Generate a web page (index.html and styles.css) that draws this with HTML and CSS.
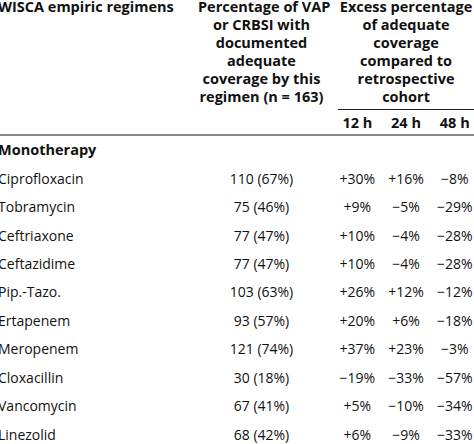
FILE: index.html
```html
<!DOCTYPE html>
<html>
<head>
<meta charset="utf-8">
<link rel="stylesheet" href="styles.css">
</head>
<body>
<table class="tbl">
  <colgroup>
    <col class="c-name">
    <col class="c-pct">
    <col class="c-h">
    <col class="c-h">
    <col class="c-h">
  </colgroup>
  <thead>
    <tr>
      <th class="h-name" rowspan="2">WISCA empiric regimens</th>
      <th class="h-pct" rowspan="2">Percentage of VAP<br>or CRBSI with<br>documented<br>adequate<br>coverage by this<br>regimen (n = 163)</th>
      <th class="h-excess" colspan="3">Excess percentage<br>of adequate<br>coverage<br>compared to<br>retrospective<br>cohort</th>
    </tr>
    <tr>
      <th class="h-time">12 h</th>
      <th class="h-time">24 h</th>
      <th class="h-time">48 h</th>
    </tr>
  </thead>
  <tbody>
    <tr class="group"><td colspan="5">Monotherapy</td></tr>
    <tr><td>Ciprofloxacin</td><td class="pct">110 (67%)</td><td class="num">+30%</td><td class="num">+16%</td><td class="num">&minus;8%</td></tr>
    <tr><td>Tobramycin</td><td class="pct">75 (46%)</td><td class="num">+9%</td><td class="num">&minus;5%</td><td class="num">&minus;29%</td></tr>
    <tr><td>Ceftriaxone</td><td class="pct">77 (47%)</td><td class="num">+10%</td><td class="num">&minus;4%</td><td class="num">&minus;28%</td></tr>
    <tr><td>Ceftazidime</td><td class="pct">77 (47%)</td><td class="num">+10%</td><td class="num">&minus;4%</td><td class="num">&minus;28%</td></tr>
    <tr><td>Pip.-Tazo.</td><td class="pct">103 (63%)</td><td class="num">+26%</td><td class="num">+12%</td><td class="num">&minus;12%</td></tr>
    <tr><td>Ertapenem</td><td class="pct">93 (57%)</td><td class="num">+20%</td><td class="num">+6%</td><td class="num">&minus;18%</td></tr>
    <tr><td>Meropenem</td><td class="pct">121 (74%)</td><td class="num">+37%</td><td class="num">+23%</td><td class="num">&minus;3%</td></tr>
    <tr><td>Cloxacillin</td><td class="pct">30 (18%)</td><td class="num">&minus;19%</td><td class="num">&minus;33%</td><td class="num">&minus;57%</td></tr>
    <tr><td>Vancomycin</td><td class="pct">67 (41%)</td><td class="num">+5%</td><td class="num">&minus;10%</td><td class="num">&minus;34%</td></tr>
    <tr><td>Linezolid</td><td class="pct">68 (42%)</td><td class="num">+6%</td><td class="num">&minus;9%</td><td class="num">&minus;33%</td></tr>
  </tbody>
</table>
</body>
</html>
```
FILE: styles.css
```css
html, body {
  margin: 0;
  padding: 0;
  background: #fff;
  overflow: hidden;
}
body {
  width: 474px;
  height: 444px;
}
.tbl {
  border-collapse: collapse;
  table-layout: fixed;
  width: 481px;
  margin: -2px 0 0 -2px;
  font-family: "Open Sans", "Liberation Sans", sans-serif;
  font-size: 14px;
  line-height: 18px;
  color: #111;
}
.c-name { width: 200px; }
.c-pct { width: 135px; }
.c-h { width: 48.7px; }
.tbl th,
.tbl td {
  padding: 0;
  white-space: nowrap;
}
.tbl th {
  font-weight: 700;
  font-size: 14.5px;
  vertical-align: top;
}
.tbl .h-name {
  text-align: left;
}
.tbl .h-pct {
  text-align: center;
  padding-right: 8px;
}
.tbl .h-excess {
  text-align: center;
  padding-bottom: 4px;
  background-image: linear-gradient(#222, #222);
  background-size: calc(100% - 5px) 1px;
  background-position: right bottom;
  background-repeat: no-repeat;
}
.tbl .h-time {
  text-align: center;
  padding: 4px 0 2px;
}
.tbl thead tr:last-child th,
.tbl thead tr:first-child th[rowspan] {
  border-bottom: 2px solid #8a8a8a;
}
.tbl tbody td {
  height: 28.45px;
  vertical-align: middle;
}
.tbl .group td {
  font-weight: 700;
  font-size: 14.5px;
}
.tbl .pct {
  text-align: center;
  padding-right: 8px;
}
.tbl .num {
  text-align: center;
}
```
